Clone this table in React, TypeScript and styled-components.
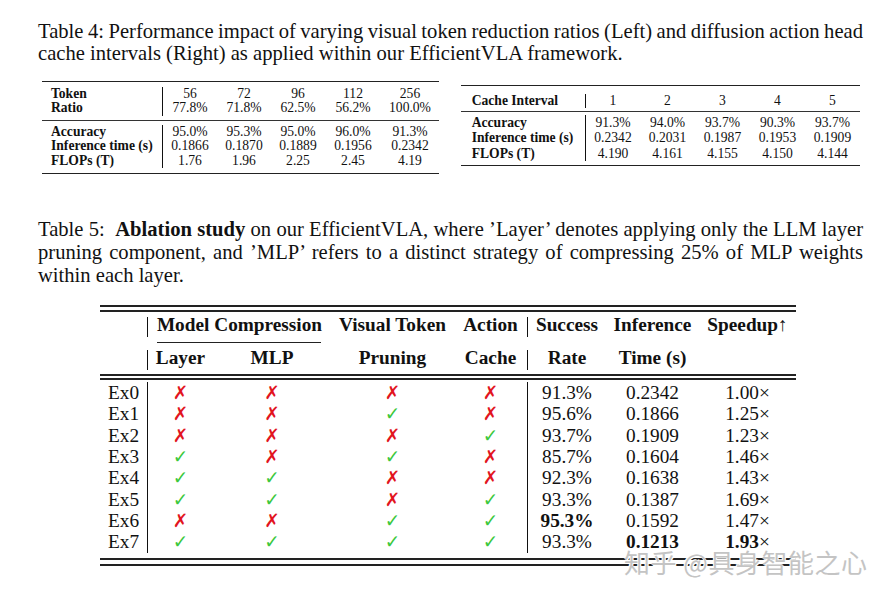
import styled, { createGlobalStyle } from 'styled-components'

const GlobalStyle = createGlobalStyle`
  html, body {
    margin: 0;
    padding: 0;
    background: #ffffff;
  }
  body {
    font-family: "Liberation Serif", "Times New Roman", serif;
    color: #111111;
  }
`

const Page = styled.div`
  position: relative;
  width: 889px;
  height: 597px;
  box-sizing: border-box;
  padding: 19.6px 26px 0 38px;
  overflow: hidden;
  background: #ffffff;
`

const Caption = styled.div<{ $lh: number }>`
  font-size: 20.6px;
  line-height: ${(p) => p.$lh}px;
  color: #111;
`

const CaptionLine = styled.div<{ $last?: boolean }>`
  text-align: ${(p) => (p.$last ? 'left' : 'justify')};
  text-align-last: ${(p) => (p.$last ? 'left' : 'justify')};
  word-spacing: ${(p) => (p.$last ? '0' : '-2px')};
  white-space: nowrap;
`

const TablesRow = styled.div`
  display: flex;
  align-items: flex-start;
  gap: 22px;
  margin: 16.8px 0 0 4px;
`

const SmallTable = styled.div<{ $width: number; $offset?: number }>`
  width: ${(p) => p.$width}px;
  margin-top: ${(p) => p.$offset ?? 0}px;
  font-size: 13.6px;
  border-top: 1.5px solid #222;
  border-bottom: 1.5px solid #222;
`

const Section = styled.div<{ $cols: string; $pad: string; $lh: number; $rule?: boolean }>`
  display: grid;
  grid-template-columns: ${(p) => p.$cols};
  padding: ${(p) => p.$pad};
  line-height: ${(p) => p.$lh}px;
  border-top: ${(p) => (p.$rule ? '1px solid #333' : 'none')};
`

const Label = styled.div<{ $indent: number }>`
  font-weight: bold;
  padding-left: ${(p) => p.$indent}px;
  white-space: nowrap;
`

const Value = styled.div<{ $bar?: boolean }>`
  text-align: center;
  white-space: nowrap;
  border-left: ${(p) => (p.$bar ? '1px solid #111' : 'none')};
`

const Caption2 = styled(Caption)`
  margin-top: 43.2px;
`

const Ablation = styled.div`
  width: 696px;
  margin: 17.7px 0 0 62px;
  font-size: 19.3px;
`

const DoubleRule = styled.div<{ $gap: number; $top?: number }>`
  height: ${(p) => p.$gap}px;
  margin-top: ${(p) => p.$top ?? 0}px;
  border-top: 2px solid #222;
  border-bottom: 2px solid #222;
`

const cols5 = '47px 66px 118px 123px 73px 79px 93px 97px'

const HeadRow = styled.div<{ $top: number }>`
  display: grid;
  grid-template-columns: ${cols5};
  margin-top: ${(p) => p.$top}px;
  font-weight: bold;
`

const HeadCell = styled.div<{ $bar?: boolean; $span?: number }>`
  grid-column: span ${(p) => p.$span ?? 1};
  text-align: center;
  white-space: nowrap;
  line-height: 15.6px;
  height: 20px;
  box-sizing: border-box;
  padding-bottom: 4.4px;
  border-left: ${(p) => (p.$bar ? '1px solid #111' : 'none')};
`

const Arrow = styled.span`
  font-weight: normal;
`

const CMidRow = styled.div`
  display: grid;
  grid-template-columns: ${cols5};
  margin-top: 5px;
`

const CMidRule = styled.div`
  grid-column: 2 / 4;
  margin: 0 10px;
  border-top: 1px solid #222;
`

const Body = styled.div`
  display: grid;
  grid-template-columns: ${cols5};
  grid-auto-rows: 21.3px;
  padding: 2.1px 0 5.1px;
`

const Cell = styled.div<{ $bar?: boolean }>`
  text-align: center;
  white-space: nowrap;
  line-height: 21.3px;
  border-left: ${(p) => (p.$bar ? '1px solid #111' : 'none')};
`

const Mark = styled.span<{ $ok: boolean }>`
  font-family: "DejaVu Sans", sans-serif;
  font-size: 18.5px;
  color: ${(p) => (p.$ok ? '#3cc83c' : '#e2141e')};
`

const Watermark = styled.div`
  position: absolute;
  left: 624px;
  top: 549px;
  font-family: "Noto Sans CJK SC", "Noto Sans", sans-serif;
  font-size: 26px;
  line-height: 26px;
  letter-spacing: 0.5px;
  color: #c4c4c4;
  white-space: nowrap;
  text-shadow: 0 0 1px #fff, 1px 1px 0 #fff, -1px -1px 0 #fff;
`

type SmallRow = { label: string; values: string[] }

const leftHead: SmallRow[] = [
  { label: 'Token', values: ['56', '72', '96', '112', '256'] },
  { label: 'Ratio', values: ['77.8%', '71.8%', '62.5%', '56.2%', '100.0%'] },
]
const leftBody: SmallRow[] = [
  { label: 'Accuracy', values: ['95.0%', '95.3%', '95.0%', '96.0%', '91.3%'] },
  { label: 'Inference time (s)', values: ['0.1866', '0.1870', '0.1889', '0.1956', '0.2342'] },
  { label: 'FLOPs (T)', values: ['1.76', '1.96', '2.25', '2.45', '4.19'] },
]
const rightHead: SmallRow[] = [{ label: 'Cache Interval', values: ['1', '2', '3', '4', '5'] }]
const rightBody: SmallRow[] = [
  { label: 'Accuracy', values: ['91.3%', '94.0%', '93.7%', '90.3%', '93.7%'] },
  { label: 'Inference time (s)', values: ['0.2342', '0.2031', '0.1987', '0.1953', '0.1909'] },
  { label: 'FLOPs (T)', values: ['4.190', '4.161', '4.155', '4.150', '4.144'] },
]

const leftCols = '120px 55px 54px 54px 56px 58px'
const rightCols = '124px 55px 55px 55px 55px 55px'

type Ablate = {
  name: string
  marks: boolean[]
  rate: string
  time: string
  speed: string
  boldRate?: boolean
  boldTime?: boolean
  boldSpeed?: boolean
}

const rows: Ablate[] = [
  { name: 'Ex0', marks: [false, false, false, false], rate: '91.3%', time: '0.2342', speed: '1.00' },
  { name: 'Ex1', marks: [false, false, true, false], rate: '95.6%', time: '0.1866', speed: '1.25' },
  { name: 'Ex2', marks: [false, false, false, true], rate: '93.7%', time: '0.1909', speed: '1.23' },
  { name: 'Ex3', marks: [true, false, true, false], rate: '85.7%', time: '0.1604', speed: '1.46' },
  { name: 'Ex4', marks: [true, true, false, false], rate: '92.3%', time: '0.1638', speed: '1.43' },
  { name: 'Ex5', marks: [true, true, false, true], rate: '93.3%', time: '0.1387', speed: '1.69' },
  { name: 'Ex6', marks: [false, false, true, true], rate: '95.3%', time: '0.1592', speed: '1.47', boldRate: true },
  { name: 'Ex7', marks: [true, true, true, true], rate: '93.3%', time: '0.1213', speed: '1.93', boldTime: true, boldSpeed: true },
]

const SmallLines = ({ data, indent }: { data: SmallRow[]; indent: number }) => (
  <>
    {data.map((r) => [
      <Label key={r.label} $indent={indent}>{r.label}</Label>,
      ...r.values.map((v, i) => (
        <Value key={r.label + i} $bar={i === 0}>{v}</Value>
      )),
    ])}
  </>
)

const App = () => {
  return (
    <>
      <GlobalStyle />
      <Page>
        <Caption $lh={22.3}>
          <CaptionLine>
            Table 4: Performance impact of varying visual token reduction ratios (Left) and diffusion action head
          </CaptionLine>
          <CaptionLine $last>cache intervals (Right) as applied within our EfficientVLA framework.</CaptionLine>
        </Caption>

        <TablesRow>
          <SmallTable $width={397}>
            <Section $cols={leftCols} $pad="4.8px 0 3.8px" $lh={14.6}>
              <SmallLines data={leftHead} indent={9} />
            </Section>
            <Section $cols={leftCols} $pad="3.8px 0 5.1px" $lh={14.6} $rule>
              <SmallLines data={leftBody} indent={9} />
            </Section>
          </SmallTable>
          <SmallTable $width={399} $offset={4.5}>
            <Section $cols={rightCols} $pad="7.4px 0 2.5px" $lh={14.6}>
              <SmallLines data={rightHead} indent={10.7} />
            </Section>
            <Section $cols={rightCols} $pad="3px 0 4.2px" $lh={15.3} $rule>
              <SmallLines data={rightBody} indent={10.7} />
            </Section>
          </SmallTable>
        </TablesRow>

        <Caption2 $lh={23.3}>
          <CaptionLine>
            Table 5:&nbsp; <b>Ablation study</b> on our EfficientVLA, where ’Layer’ denotes applying only the LLM layer
          </CaptionLine>
          <CaptionLine>
            pruning component, and ’MLP’ refers to a distinct strategy of compressing 25% of MLP weights
          </CaptionLine>
          <CaptionLine $last>within each layer.</CaptionLine>
        </Caption2>

        <Ablation>
          <DoubleRule $gap={3} />
          <HeadRow $top={4.4}>
            <HeadCell />
            <HeadCell $bar $span={2}>Model Compression</HeadCell>
            <HeadCell>Visual Token</HeadCell>
            <HeadCell>Action</HeadCell>
            <HeadCell $bar>Success</HeadCell>
            <HeadCell>Inference</HeadCell>
            <HeadCell>
              Speedup<Arrow>↑</Arrow>
            </HeadCell>
          </HeadRow>
          <CMidRow>
            <CMidRule />
          </CMidRow>
          <HeadRow $top={7.3}>
            <HeadCell />
            <HeadCell $bar>Layer</HeadCell>
            <HeadCell>MLP</HeadCell>
            <HeadCell>Pruning</HeadCell>
            <HeadCell>Cache</HeadCell>
            <HeadCell $bar>Rate</HeadCell>
            <HeadCell>Time (s)</HeadCell>
            <HeadCell />
          </HeadRow>
          <DoubleRule $gap={2.5} $top={3.7} />
          <Body>
            {rows.map((r) => [
              <Cell key={r.name}>{r.name}</Cell>,
              ...r.marks.map((m, i) => (
                <Cell key={r.name + 'm' + i} $bar={i === 0}>
                  <Mark $ok={m}>{m ? '✓' : '✗'}</Mark>
                </Cell>
              )),
              <Cell key={r.name + 'r'} $bar>
                {r.boldRate ? <b>{r.rate}</b> : r.rate}
              </Cell>,
              <Cell key={r.name + 't'}>{r.boldTime ? <b>{r.time}</b> : r.time}</Cell>,
              <Cell key={r.name + 's'}>
                {r.boldSpeed ? <b>{r.speed}</b> : r.speed}×
              </Cell>,
            ])}
          </Body>
          <DoubleRule $gap={4} />
        </Ablation>

        <Watermark>知乎 @具身智能之心</Watermark>
      </Page>
    </>
  )
}

export default App
